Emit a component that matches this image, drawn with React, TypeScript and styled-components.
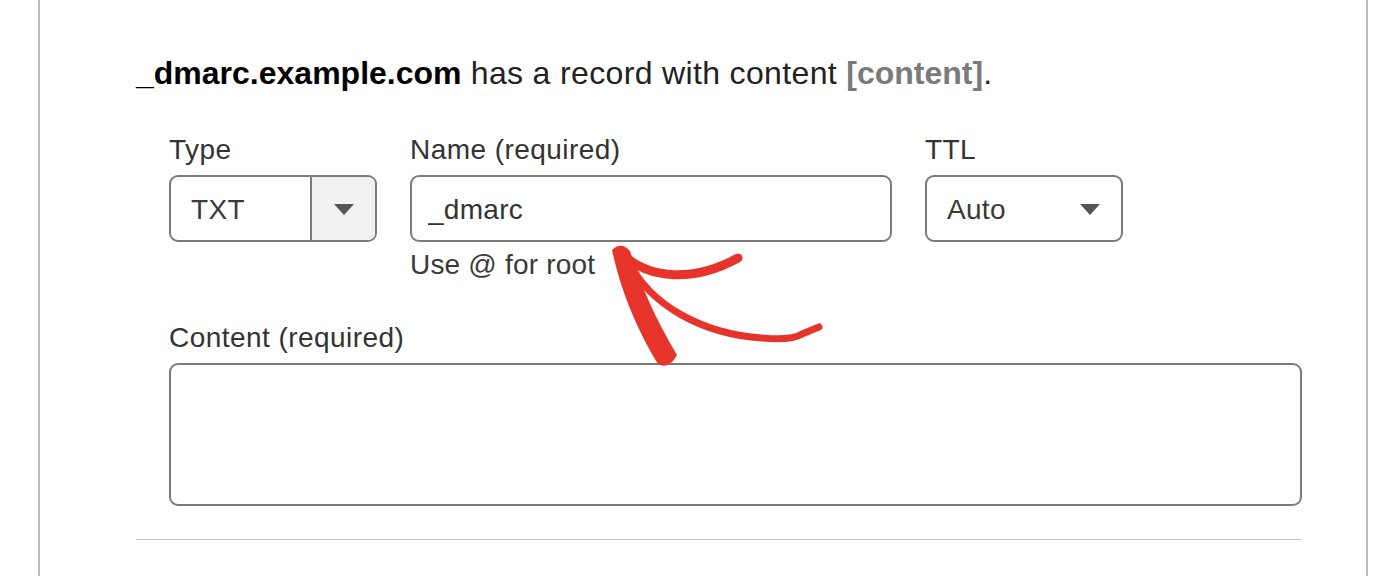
import { FC } from 'react';
import styled, { createGlobalStyle } from 'styled-components';

const GlobalStyle = createGlobalStyle`
  html,
  body {
    margin: 0;
    padding: 0;
    height: 100%;
    overflow: hidden;
    background: #ffffff;
  }
  body {
    font-family: 'Liberation Sans', Arial, sans-serif;
    color: #333333;
  }
`;

type SelectProps = {
  value: string;
  width: number;
  split?: boolean;
};

const Select: FC<SelectProps> = ({ value, width, split }) => {
  return (
    <SelectBox $width={width}>
      <SelectValue>{value}</SelectValue>
      <ArrowPane $split={split}>
        <Caret />
      </ArrowPane>
    </SelectBox>
  );
};

const ArrowMark: FC = () => (
  <Annotation viewBox="590 235 250 135" width="250" height="135">
    <path
      d="M610 250 C617 283 631 323 656 364 Q667 370 675 355 C653 318 639 286 628 251 Q619 241 610 250 Z"
      fill="#e7342a"
    />
    <path
      d="M620 254 C648 280 692 282 736 258"
      fill="none"
      stroke="#e7342a"
      strokeWidth="9"
      strokeLinecap="round"
    />
    <path
      d="M627 262 C648 305 700 334 760 338 C780 340 792 339 800 334 L817 327"
      fill="none"
      stroke="#e7342a"
      strokeWidth="7"
      strokeLinecap="round"
      strokeLinejoin="round"
    />
  </Annotation>
);

const App: FC = () => {
  return (
    <>
      <GlobalStyle />
      <Panel>
        <Heading>
          <Domain>_dmarc.example.com</Domain> has a record with content{' '}
          <Placeholder>[content]</Placeholder>.
        </Heading>
        <Form>
          <FieldRow>
            <Field $width={208}>
              <Label>Type</Label>
              <Select value="TXT" width={208} split />
            </Field>
            <Field $width={482}>
              <Label>Name (required)</Label>
              <TextInput readOnly value="_dmarc" />
              <Hint>Use @ for root</Hint>
            </Field>
            <Field $width={198}>
              <Label>TTL</Label>
              <Select value="Auto" width={198} />
            </Field>
          </FieldRow>
          <ContentField>
            <Label>Content (required)</Label>
            <TextArea readOnly />
          </ContentField>
        </Form>
        <Divider />
        <ArrowMark />
      </Panel>
    </>
  );
};

export default App;

const Panel = styled.div`
  position: relative;
  box-sizing: border-box;
  margin-left: 38px;
  width: 1330px;
  min-height: 100vh;
  padding: 53px 64px 0 96px;
  border-left: 2px solid #bdbdbd;
  border-right: 2px solid #bdbdbd;
`;

const Heading = styled.p`
  margin: 0;
  font-size: 32px;
  line-height: 40px;
  letter-spacing: 0.35px;
  color: #222222;
`;
const Domain = styled.strong`
  font-weight: 700;
  letter-spacing: 0;
  color: #000000;
`;
const Placeholder = styled.strong`
  font-weight: 700;
  letter-spacing: 0;
  color: #7a7a7a;
`;

const Form = styled.div`
  padding-left: 33px;
  margin-top: 41px;
`;

const FieldRow = styled.div`
  display: flex;
  align-items: flex-start;
  gap: 33px;
`;
const Field = styled.div<{ $width: number }>`
  display: flex;
  flex-direction: column;
  width: ${(p) => p.$width}px;
`;
const Label = styled.label`
  font-size: 28px;
  line-height: 32px;
  letter-spacing: 0.45px;
  color: #333333;
  margin-bottom: 9px;
`;

const SelectBox = styled.div<{ $width: number }>`
  box-sizing: border-box;
  display: flex;
  width: ${(p) => p.$width}px;
  height: 67px;
  border: 2px solid #7b7b7b;
  border-radius: 9px;
  overflow: hidden;
  background: #ffffff;
`;
const SelectValue = styled.span`
  flex: 1;
  display: flex;
  align-items: center;
  padding: 2px 0 0 20px;
  font-size: 28px;
  letter-spacing: 0.3px;
  color: #3a3a3a;
`;
const ArrowPane = styled.span<{ $split?: boolean }>`
  display: flex;
  align-items: center;
  justify-content: center;
  width: ${(p) => (p.$split ? '63px' : '62px')};
  border-left: ${(p) => (p.$split ? '2px solid #7b7b7b' : 'none')};
  background: ${(p) => (p.$split ? '#f2f1f1' : 'transparent')};
`;
const Caret = styled.span`
  width: 0;
  height: 0;
  margin-top: 2px;
  border-left: 10px solid transparent;
  border-right: 10px solid transparent;
  border-top: 11px solid #555555;
`;

const TextInput = styled.input`
  box-sizing: border-box;
  width: 100%;
  height: 67px;
  margin: 0;
  padding: 2px 16px 0;
  border: 2px solid #7b7b7b;
  border-radius: 9px;
  font-family: 'Liberation Sans', Arial, sans-serif;
  font-size: 28px;
  letter-spacing: 0.3px;
  color: #333333;
  background: #ffffff;
  outline: none;
`;
const Hint = styled.span`
  margin-top: 7px;
  font-size: 28px;
  line-height: 32px;
  letter-spacing: 0.2px;
  color: #3a3a3a;
`;

const ContentField = styled.div`
  display: flex;
  flex-direction: column;
  margin-top: 41px;
`;
const TextArea = styled.textarea`
  box-sizing: border-box;
  width: 1133px;
  height: 143px;
  margin: 0;
  padding: 14px 16px;
  border: 2px solid #7b7b7b;
  border-radius: 9px;
  font-family: 'Liberation Sans', Arial, sans-serif;
  font-size: 28px;
  resize: none;
  outline: none;
  background: #ffffff;
`;

const Divider = styled.hr`
  margin: 33px 0 0;
  border: none;
  border-top: 1.5px solid #c6c6c6;
`;

const Annotation = styled.svg`
  position: absolute;
  left: 552px;
  top: 235px;
  overflow: visible;
  pointer-events: none;
`;
